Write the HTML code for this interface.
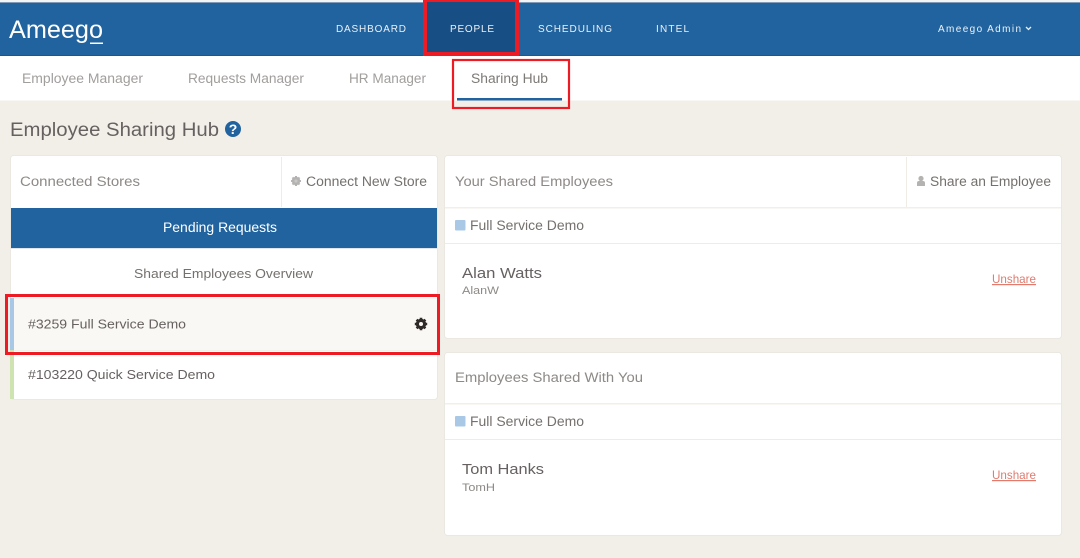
<!DOCTYPE html>
<html><head><meta charset="utf-8"><title>Employee Sharing Hub</title>
<style>
html,body{margin:0;padding:0;background:#f2efe9;width:1080px;height:558px;overflow:hidden}
svg{display:block}
text{font-family:"Liberation Sans",sans-serif;}
</style></head><body>
<svg width="1080" height="558" viewBox="0 0 1080 558" xmlns="http://www.w3.org/2000/svg">
<defs>
<g id="gear">
<circle r="3.8" fill="none" stroke="currentColor" stroke-width="2.8"/>
<path d="M-1.3-6.200h2.600v12.400h-2.600zM-6.200-1.300h12.400v2.600h-12.400z" fill="currentColor"/>
<path d="M-1.300-6.200h2.600v12.400h-2.600zM-6.200-1.300h12.400v2.600h-12.400z" fill="currentColor" transform="rotate(45)"/>
<circle r="2" fill="var(--c,#faf8f5)"/>
</g>
</defs>
<rect width="1080" height="558" fill="#f2efe9"/>
<!-- header -->
<rect width="1080" height="2" fill="#f4f4f4"/>
<rect y="2" width="1080" height="1" fill="#7f9dbb"/>
<rect y="3" width="1080" height="52" fill="#21639e"/>
<rect y="55" width="1080" height="1" fill="#1a5790"/>
<rect y="56" width="1080" height="44.500" fill="#fff"/>
<rect x="426" y="2" width="91" height="52" fill="#174f85"/>
<text x="9" y="38" font-size="25" fill="#fff" textLength="94" lengthAdjust="spacingAndGlyphs">Ameego</text>
<rect x="90" y="42.500" width="13" height="1.500" fill="#fff"/>
<g font-size="10" fill="#eaf1f8">
<text x="336" y="32" textLength="70" lengthAdjust="spacing">DASHBOARD</text>
<text x="450" y="32" textLength="44" lengthAdjust="spacing">PEOPLE</text>
<text x="538" y="32" textLength="74" lengthAdjust="spacing">SCHEDULING</text>
<text x="656" y="32" textLength="33" lengthAdjust="spacing">INTEL</text>
<text x="938" y="32" textLength="83" lengthAdjust="spacing">Ameego Admin</text>
</g>
<path d="M1026 27l2.500 2.500 2.500-2.500" fill="none" stroke="#eaf1f8" stroke-width="1.300"/>
<!-- sub nav -->
<g font-size="13.500" fill="#a19e9c">
<text x="22" y="83" textLength="121" lengthAdjust="spacingAndGlyphs">Employee Manager</text>
<text x="188" y="83" textLength="116" lengthAdjust="spacingAndGlyphs">Requests Manager</text>
<text x="349" y="83" textLength="77" lengthAdjust="spacingAndGlyphs">HR Manager</text>
</g>
<text x="471" y="83" font-size="13.500" fill="#7d7975" textLength="77" lengthAdjust="spacingAndGlyphs">Sharing Hub</text>
<rect x="457" y="98" width="105" height="2.500" fill="#21639e"/>
<!-- title -->
<text x="10" y="136" font-size="19" fill="#666160" textLength="209" lengthAdjust="spacingAndGlyphs">Employee Sharing Hub</text>
<circle cx="233" cy="129" r="8" fill="#21639e"/>
<text x="233" y="134" font-size="14" font-weight="bold" fill="#fff" text-anchor="middle">?</text>
<!-- left card -->
<rect x="10.500" y="155.500" width="427" height="244" rx="3" fill="#fff" stroke="#ebe8e1"/>
<rect x="281" y="157" width="1" height="50" fill="#efece6"/>
<text x="20" y="186" font-size="13.500" fill="#8d8986" textLength="120" lengthAdjust="spacingAndGlyphs">Connected Stores</text>
<use href="#gear" transform="translate(296 181) scale(.8)" style="color:#b5b3b1;--c:#c9c7c5"/>
<text x="306" y="186" font-size="13.500" fill="#74706d" textLength="121" lengthAdjust="spacingAndGlyphs">Connect New Store</text>
<rect x="11" y="208" width="426" height="40" fill="#21639e"/>
<rect x="11" y="248" width="426" height="1" fill="#dfe6ec"/>
<text x="163" y="232" font-size="13.500" fill="#fff" textLength="114" lengthAdjust="spacingAndGlyphs">Pending Requests</text>
<text x="134" y="278" font-size="13" fill="#74706d" textLength="179" lengthAdjust="spacingAndGlyphs">Shared Employees Overview</text>
<rect x="11" y="298" width="426" height="52" fill="#faf8f5"/>
<rect x="10" y="298" width="4" height="52" fill="#a9c8e6"/>
<rect x="10" y="350" width="4" height="49" fill="#cfe3b0"/>
<rect x="14" y="350" width="423" height="1" fill="#f2efe9"/>
<text x="28" y="328.500" font-size="13" fill="#666160" textLength="158" lengthAdjust="spacingAndGlyphs">#3259 Full Service Demo</text>
<text x="28" y="379" font-size="13" fill="#666160" textLength="187" lengthAdjust="spacingAndGlyphs">#103220 Quick Service Demo</text>
<use href="#gear" transform="translate(421 324)" style="color:#2f2b29;--c:#faf8f5"/>
<!-- right card 1 -->
<rect x="444.500" y="155.500" width="617" height="183" rx="3" fill="#fff" stroke="#ebe8e1"/>
<rect x="906" y="157" width="1" height="50" fill="#efece6"/>
<rect x="445" y="207" width="616" height="1.500" fill="#f2efe9"/>
<rect x="445" y="243" width="616" height="1" fill="#efece6"/>
<text x="455" y="186" font-size="13.500" fill="#8d8986" textLength="158" lengthAdjust="spacingAndGlyphs">Your Shared Employees</text>
<circle cx="921" cy="178.500" r="2.600" fill="#b5b3b1"/>
<path d="M917 186v-3q0-2 2-2h4q2 0 2 2v3z" fill="#b5b3b1"/>
<text x="930" y="186" font-size="13.500" fill="#74706d" textLength="121" lengthAdjust="spacingAndGlyphs">Share an Employee</text>
<rect x="455" y="220" width="10.500" height="10.500" rx="1" fill="#a9c8e6"/>
<text x="470" y="230" font-size="13.500" fill="#74706d" textLength="114" lengthAdjust="spacingAndGlyphs">Full Service Demo</text>
<text x="462" y="278" font-size="15" fill="#666160" textLength="80" lengthAdjust="spacingAndGlyphs">Alan Watts</text>
<text x="462" y="294" font-size="11" fill="#8d8986" textLength="37" lengthAdjust="spacingAndGlyphs">AlanW</text>
<text x="992" y="283" font-size="12" fill="#e07b6e" text-decoration="underline" textLength="44" lengthAdjust="spacingAndGlyphs">Unshare</text>
<!-- right card 2 -->
<rect x="444.500" y="352.500" width="617" height="183" rx="3" fill="#fff" stroke="#ebe8e1"/>
<rect x="445" y="403" width="616" height="1.500" fill="#f2efe9"/>
<rect x="445" y="439" width="616" height="1" fill="#efece6"/>
<text x="455" y="382" font-size="13.500" fill="#8d8986" textLength="188" lengthAdjust="spacingAndGlyphs">Employees Shared With You</text>
<rect x="455" y="416" width="10.500" height="10.500" rx="1" fill="#a9c8e6"/>
<text x="470" y="426" font-size="13.500" fill="#74706d" textLength="114" lengthAdjust="spacingAndGlyphs">Full Service Demo</text>
<text x="462" y="474" font-size="15" fill="#666160" textLength="82" lengthAdjust="spacingAndGlyphs">Tom Hanks</text>
<text x="462" y="491" font-size="11" fill="#8d8986" textLength="33" lengthAdjust="spacingAndGlyphs">TomH</text>
<text x="992" y="479" font-size="12" fill="#e07b6e" text-decoration="underline" textLength="44" lengthAdjust="spacingAndGlyphs">Unshare</text>
<!-- red highlight boxes -->
<g fill="none" stroke="#ed1c24">
<rect x="425" y="0" width="92" height="54" stroke-width="4"/>
<rect x="453" y="60" width="116" height="48" stroke-width="2.200"/>
<rect x="6.500" y="295.500" width="432" height="58" stroke-width="3"/>
</g>
</svg>
</body></html>
